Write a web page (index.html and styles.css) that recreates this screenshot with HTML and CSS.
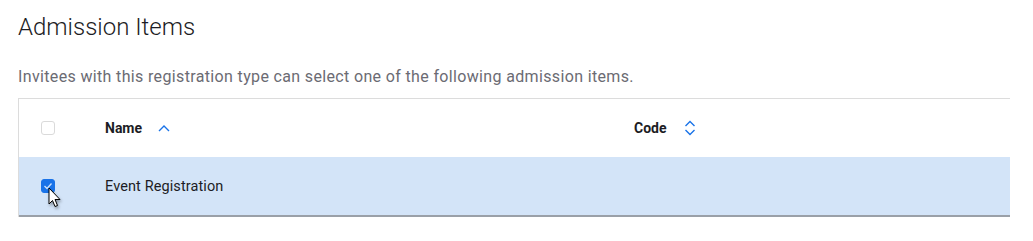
FILE: index.html
```html
<!DOCTYPE html>
<html>
<head>
<meta charset="utf-8">
<link rel="stylesheet" href="styles.css">
</head>
<body>
<div class="page">
  <h1 class="title">Admission Items</h1>
  <p class="desc">Invitees with this registration type can select one of the following admission items.</p>
  <div class="table">
    <div class="row head">
      <div class="cell check"><span class="box"></span></div>
      <div class="cell name">Name
        <svg class="sort" width="12" height="7" viewBox="0 0 12 7"><path d="M1 6 L6 1 L11 6" fill="none" stroke="#1a73e8" stroke-width="1.4"/></svg>
      </div>
      <div class="cell code">Code
        <svg class="sort2" width="12" height="16" viewBox="0 0 12 16"><path d="M1.5 6 L6 1.5 L10.5 6 M1.5 10 L6 14.5 L10.5 10" fill="none" stroke="#1a73e8" stroke-width="1.4"/></svg>
      </div>
    </div>
    <div class="row sel">
      <div class="cell check"><span class="box on"><svg width="10" height="8" viewBox="0 0 10 8"><path d="M1.5 4 L4 6.5 L8.5 1.5" fill="none" stroke="#cfe3fb" stroke-width="1.3"/></svg></span>
        <svg class="cursor" width="14" height="22" viewBox="0 0 14 22"><path d="M1 1 L1 17 L4.5 13.5 L7 19.5 L9.5 18.5 L7 12.5 L12 12.5 Z" fill="#fff" stroke="#000" stroke-width="1" stroke-linejoin="round"/></svg>
      </div>
      <div class="cell name">Event Registration</div>
      <div class="cell code"></div>
    </div>
  </div>
</div>
</body>
</html>
```
FILE: styles.css
```css
html, body { margin: 0; padding: 0; background: #fff; }
body { font-family: Roboto, "Open Sans", sans-serif; }
.page { padding: 11px 23px 0 18px; }
.title { margin: 0; font-weight: 300; font-size: 24px; line-height: 32px; color: #1c1c24; }
.desc { margin: 24px 0 0; font-size: 16px; letter-spacing: 0.35px; line-height: 20px; color: #6b6b73; }
.table { margin-top: 11px; border-top: 1px solid #dcdcdc; border-left: 1px solid #dcdcdc; }
.row { display: flex; align-items: center; height: 58px; }
.row.sel { background: #d3e4f8; border-bottom: 2px solid #9aa0a8; }
.cell { display: flex; align-items: center; }
.check { width: 86px; padding-left: 22px; box-sizing: border-box; position: relative; }
.name { width: 529px; font-size: 14px; color: #1c1c24; }
.sel .name { font-size: 14.5px; letter-spacing: 0.1px; }
.head .cell { font-weight: 700; }
.box { width: 12px; height: 12px; border: 1px solid #dadada; border-radius: 3px; background: #fff; display: flex; align-items: center; justify-content: center; }
.box.on { background: #1a73e8; border-color: #1a73e8; }
.code { font-size: 14px; color: #1c1c24; }
.sort { margin-left: 16px; }
.sort2 { margin-left: 17px; }
.cursor { position: absolute; left: 29px; top: 8px; filter: drop-shadow(1px 2px 1.5px rgba(0,0,0,0.35)); }
```
